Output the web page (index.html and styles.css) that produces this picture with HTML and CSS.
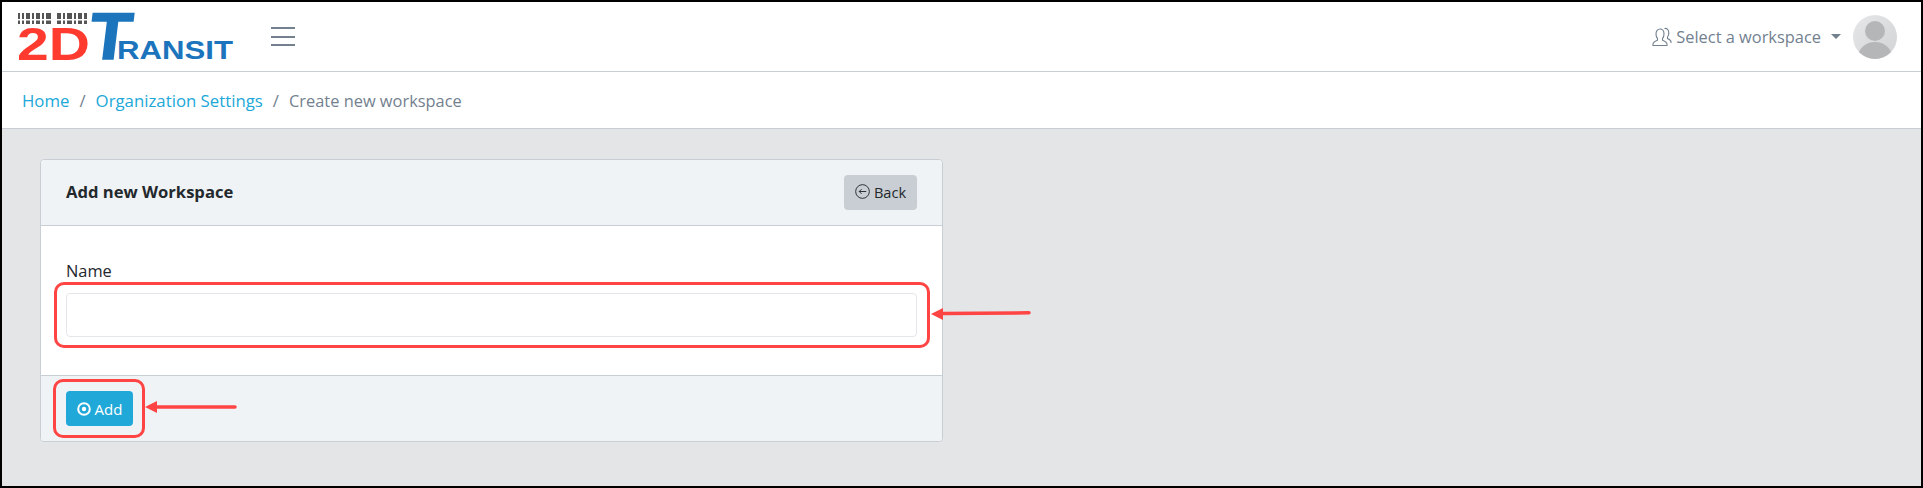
FILE: index.html
```html
<!DOCTYPE html>
<html>
<head>
    <link rel="stylesheet" href="styles.css">
</head>
<body>
    <div class="page">
        <header class="topbar">
            <a class="logo">
                <svg width="216" height="50" viewBox="0 0 216 50">
                    <g fill="#555">
                        <rect x="1" y="1" width="2" height="11"/><rect x="5" y="1" width="2" height="11"/><rect x="9" y="1" width="4" height="11"/><rect x="15" y="1" width="2" height="11"/><rect x="19" y="1" width="4" height="11"/><rect x="25" y="1" width="2" height="11"/><rect x="29" y="1" width="5" height="11"/>
                        <rect x="40" y="1" width="4" height="11"/><rect x="46" y="1" width="2" height="11"/><rect x="50" y="1" width="5" height="11"/><rect x="57" y="1" width="2" height="11"/><rect x="61" y="1" width="4" height="11"/><rect x="67" y="1" width="3" height="11"/>
                    </g>
                    <rect x="0" y="7" width="72" height="1.500" fill="#fff"/>
                    <text class="logo-2d" x="0" y="48" textLength="73" lengthAdjust="spacingAndGlyphs">2D</text>
                    <text class="logo-t" transform="translate(70 47) skewX(-7)" x="0" y="0" textLength="42" lengthAdjust="spacingAndGlyphs">T</text>
                    <text class="logo-ransit" x="100" y="47" textLength="116" lengthAdjust="spacingAndGlyphs">RANSIT</text>
                </svg>
            </a>
            <button class="toggler" type="button"><span></span><span></span><span></span></button>
            <div class="workspace">
                <svg class="people" width="20" height="20" viewBox="0 0 20 20" fill="none" stroke="#73818f" stroke-width="1.100">
                    <path d="M1 18.500v-1.500c0-2 2.500-3 4.500-3.800v-1.700c-1-1-1.500-2.500-1.500-4.500 0-3 1.700-5 4-5s4 2 4 5c0 2-.5 3.500-1.500 4.500v1.700c2 .8 4.500 1.800 4.500 3.800v1.500z"/>
                    <path d="M12.500 1.500c2.500-.5 4.300 1.500 4.300 4.500 0 1.800-.4 3-1.300 4v1.500c1.500.6 3.500 1.500 3.500 3.500v1"/>
                </svg>
                <span class="workspace-label">Select a workspace</span>
                <span class="caret"></span>
                <div class="avatar"><span class="avatar-head"></span><span class="avatar-body"></span></div>
            </div>
        </header>

        <nav class="crumbs">
            <a>Home</a><span class="sep">/</span><a>Organization Settings</a><span class="sep">/</span><span class="current">Create new workspace</span>
        </nav>

        <main class="content">
            <section class="card">
                <div class="card-header">
                    <strong>Add new Workspace</strong>
                    <button class="btn btn-back" type="button">
                        <svg width="15" height="15" viewBox="0 0 16 16" fill="none" stroke="#23282c" stroke-width="1">
                            <circle cx="8" cy="8" r="7.300"/>
                            <path d="M12 8H4.500M7 5.500 4.500 8 7 10.500"/>
                        </svg>
                        Back
                    </button>
                </div>
                <div class="card-body">
                    <label class="field-label" for="name">Name</label>
                    <input class="field" id="name" type="text">
                </div>
                <div class="card-footer">
                    <button class="btn btn-add" type="button">
                        <svg width="14" height="14" viewBox="0 0 14 14" fill="none" stroke="white" stroke-width="2">
                            <circle cx="7" cy="7" r="5.800"/>
                            <circle cx="7" cy="7" r="2.200" fill="white" stroke="none"/>
                        </svg>
                        Add
                    </button>
                </div>
            </section>
        </main>

        <!-- red annotations drawn over the screenshot -->
        <div class="mark mark-input"></div>
        <div class="mark mark-add"></div>
        <svg class="arrow arrow-input" width="100" height="14" viewBox="0 0 100 14">
            <path d="M11 6.500 98 5.800" stroke="#ff4444" stroke-width="3.500" stroke-linecap="round"/>
            <path d="M0 7 12 1v12z" fill="#ff4444"/>
        </svg>
        <svg class="arrow arrow-add" width="93" height="14" viewBox="0 0 93 14">
            <path d="M11 7H90" stroke="#ff4444" stroke-width="3.500" stroke-linecap="round"/>
            <path d="M0 7 12 1v12z" fill="#ff4444"/>
        </svg>
    </div>
</body>
</html>
```
FILE: styles.css
```css
* {
    box-sizing: border-box;
}

body {
    margin: 0;
    background-color: black;
    color: #23282c;
    font-family: "Open Sans", sans-serif;
    font-size: 16.400px;
}

.page {
    position: relative;
    height: 488px;
    border: 2px solid black;
    background-color: #e4e5e6;
    overflow: hidden;
}

.topbar {
    display: flex;
    align-items: center;
    height: 70px;
    padding: 0 24px 0 15px;
    background-color: white;
    border-bottom: 1px solid #c8ced3;
}

.logo {
    display: block;
    height: 50px;
}

.logo svg {
    overflow: visible;
}

.logo-2d {
    fill: #ff3b30;
    font-family: "Liberation Sans", sans-serif;
    font-weight: bold;
    font-size: 46px;
}

.logo-t {
    fill: #1c75bc;
    stroke: #1c75bc;
    stroke-width: 1.500px;
    font-family: "Liberation Sans", sans-serif;
    font-weight: bold;
    font-size: 66px;
}

.logo-ransit {
    fill: #1c75bc;
    font-family: "Liberation Sans", sans-serif;
    font-weight: bold;
    font-size: 25px;
}

.toggler {
    display: flex;
    flex-direction: column;
    gap: 6.500px;
    margin-left: 38px;
    padding: 0;
    border: none;
    background: none;
}

.toggler span {
    display: block;
    width: 24px;
    height: 2px;
    background-color: #73818f;
}

.workspace {
    display: flex;
    align-items: center;
    margin-left: auto;
    color: #73818f;
}

.people {
    margin-right: 4px;
}

.caret {
    width: 0;
    height: 0;
    margin: 0 12px 0 10px;
    border-top: 5px solid #73818f;
    border-left: 5px solid transparent;
    border-right: 5px solid transparent;
}

.avatar {
    position: relative;
    width: 44px;
    height: 44px;
    border-radius: 50%;
    overflow: hidden;
    background: linear-gradient(135deg, #e6e7e9, #d2d3d5);
}

.avatar-head {
    position: absolute;
    left: 12px;
    top: 6px;
    width: 20px;
    height: 20px;
    border-radius: 50%;
    background-color: #b5b6b8;
}

.avatar-body {
    position: absolute;
    left: 5px;
    top: 27px;
    width: 34px;
    height: 30px;
    border-radius: 50%;
    background-color: #b5b6b8;
}

.crumbs {
    display: flex;
    align-items: center;
    height: 57px;
    padding: 0 0 0 20px;
    background-color: white;
    border-bottom: 1px solid #c8ced3;
    font-size: 16.800px;
}

.crumbs a {
    color: #20a8d8;
}

.sep {
    margin: 0 10px;
    color: #73818f;
}

.current {
    color: #73818f;
    font-size: 16.400px;
}

.content {
    padding: 30px 0 0 38px;
}

.card {
    width: 903px;
    background-color: white;
    border: 1px solid #c8ced3;
    border-radius: 4px;
}

.card-header {
    display: flex;
    align-items: center;
    justify-content: space-between;
    height: 66px;
    padding: 0 25px;
    background-color: #f0f3f5;
    border-bottom: 1px solid #c8ced3;
    border-radius: 4px 4px 0 0;
}

.card-header strong {
    margin-top: -3px;
    font-size: 16.600px;
}

.btn {
    display: flex;
    align-items: center;
    height: 35px;
    border: none;
    border-radius: 4px;
    font-family: "Open Sans", sans-serif;
    font-size: 14.600px;
}

.btn-back {
    gap: 4px;
    width: 73px;
    justify-content: center;
    padding: 0 0 2px;
    background-color: #c8ced3;
    color: #23282c;
}

.card-body {
    height: 149px;
    padding: 34px 25px 0;
}

.field-label {
    display: block;
    margin-bottom: 11px;
    line-height: 22px;
}

.field {
    display: block;
    width: 100%;
    height: 44px;
    border: 1px solid #e4e7ea;
    border-radius: 4px;
    background-color: white;
}

.card-footer {
    height: 66px;
    padding: 15px 25px 0;
    background-color: #f0f3f5;
    border-top: 1px solid #c8ced3;
    border-radius: 0 0 4px 4px;
}

.btn-add {
    gap: 4px;
    width: 67px;
    justify-content: center;
    padding: 0;
    background-color: #20a8d8;
    color: white;
    font-size: 15px;
}

.mark {
    position: absolute;
    border: 3.500px solid #ff4444;
    border-radius: 10px;
}

.mark-input {
    left: 52px;
    top: 280px;
    width: 876px;
    height: 66px;
}

.mark-add {
    left: 51px;
    top: 377px;
    width: 92px;
    height: 59px;
}

.arrow {
    position: absolute;
}

.arrow-input {
    left: 929px;
    top: 305px;
}

.arrow-add {
    left: 143px;
    top: 398px;
}
```
